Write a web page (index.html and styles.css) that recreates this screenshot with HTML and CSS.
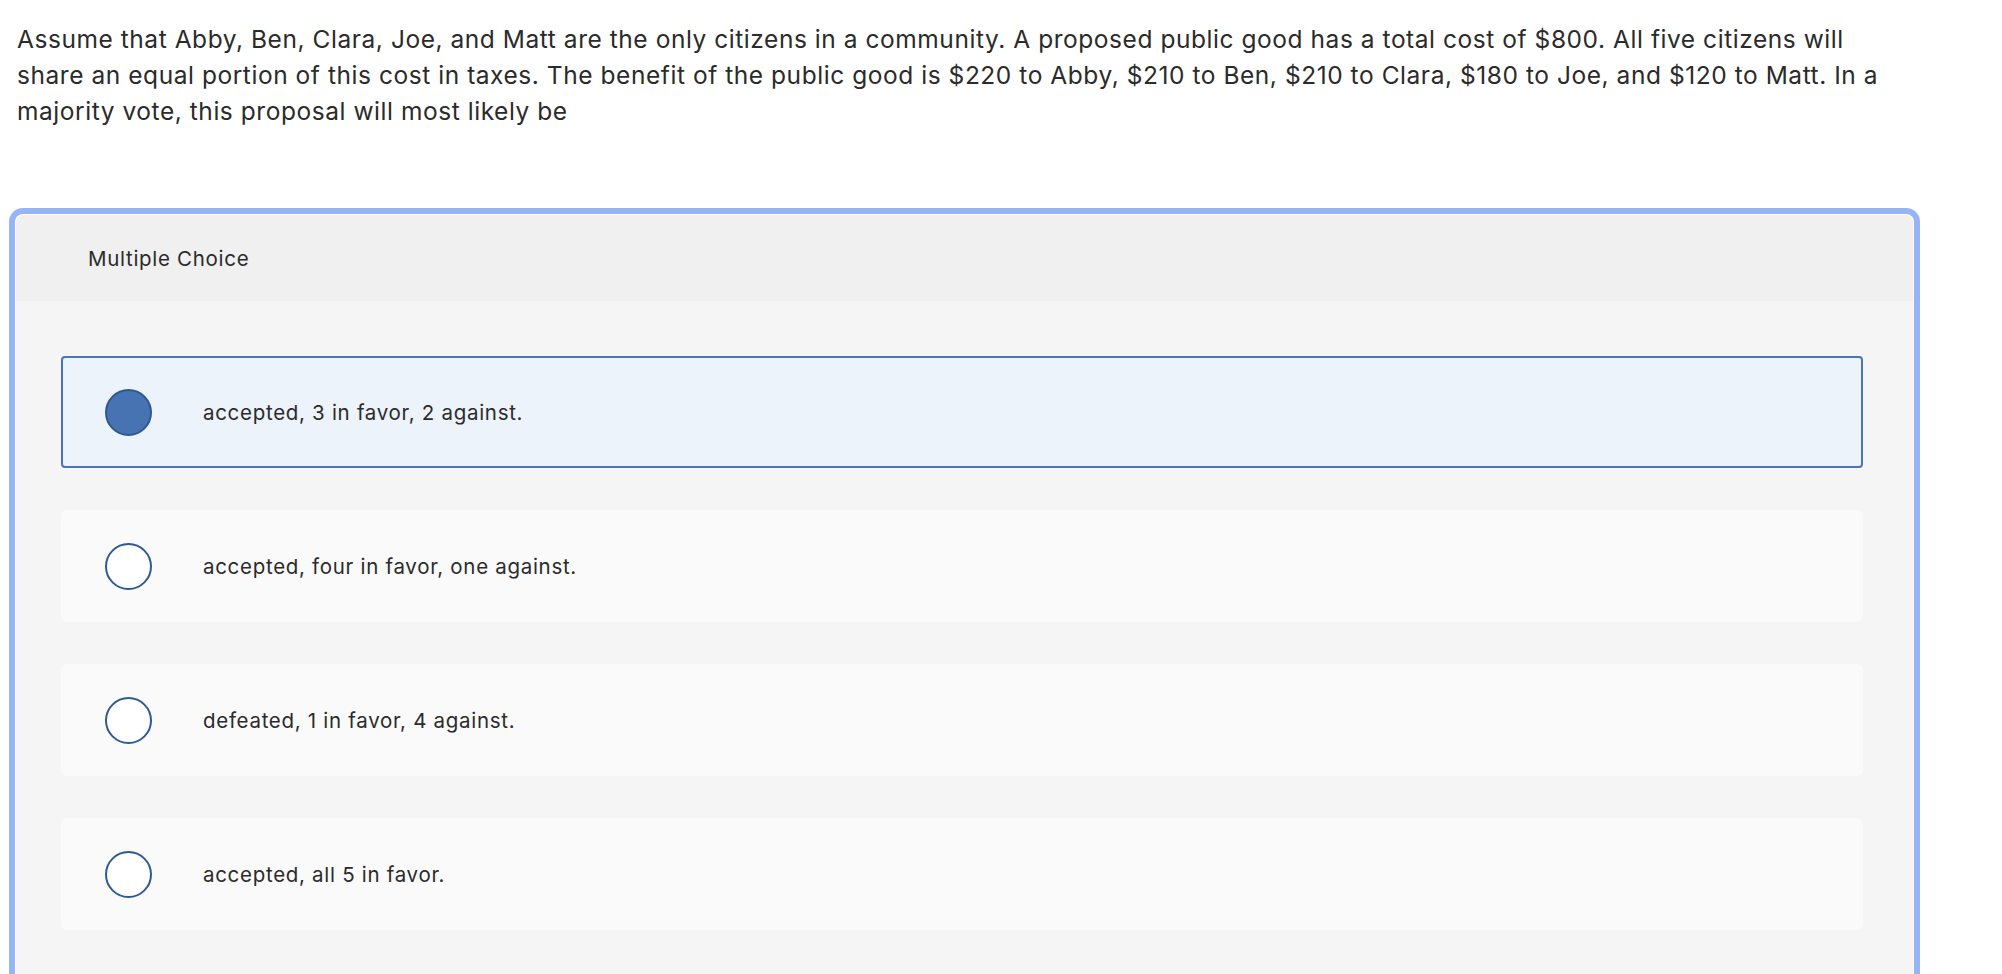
FILE: index.html
```html
<!DOCTYPE html>
<html lang="en">
<head>
<meta charset="utf-8">
<title>Multiple Choice</title>
<link rel="stylesheet" href="styles.css">
</head>
<body>
<div class="page">
  <p class="question">Assume that Abby, Ben, Clara, Joe, and Matt are the only citizens in a community. A proposed public good has a total cost of $800. All five citizens will share an equal portion of this cost in taxes. The benefit of the public good is $220 to Abby, $210 to Ben, $210 to Clara, $180 to Joe, and $120 to Matt. In a majority vote, this proposal will most likely be</p>

  <section class="frame">
    <div class="frame-inner">
      <header class="frame-head">Multiple Choice</header>
      <div class="choices">
        <div class="choice selected">
          <span class="radio"></span>
          <span class="label">accepted, 3 in favor, 2 against.</span>
        </div>
        <div class="choice">
          <span class="radio"></span>
          <span class="label">accepted, four in favor, one against.</span>
        </div>
        <div class="choice">
          <span class="radio"></span>
          <span class="label">defeated, 1 in favor, 4 against.</span>
        </div>
        <div class="choice">
          <span class="radio"></span>
          <span class="label">accepted, all 5 in favor.</span>
        </div>
      </div>
    </div>
  </section>
</div>
</body>
</html>
```
FILE: styles.css
```css
html, body {
  margin: 0;
  padding: 0;
  background: #ffffff;
}

body {
  font-family: Inter, "Open Sans", "Liberation Sans", sans-serif;
  color: #2b2b2b;
}

.page {
  padding: 21px 0 0 9px;
}

.question {
  margin: 0 0 79px 8px;
  width: 1895px;
  font-size: 24.5px;
  line-height: 36px;
  letter-spacing: 0.55px;
  color: #2b2b2b;
}

.frame {
  width: 1897px;
  border: 6px solid #97b4f6;
  border-bottom: 0;
  border-radius: 14px 14px 0 0;
  background: #ffffff;
  padding: 1px 1px 0 1px;
}

.frame-inner {
  background: #f5f5f5;
  border-radius: 8px 8px 0 0;
  overflow: hidden;
  padding-bottom: 60px;
}

.frame-head {
  height: 86px;
  display: flex;
  align-items: center;
  padding-left: 72px;
  background: #f0f0f0;
  font-size: 20.5px;
  letter-spacing: 0.7px;
  color: #2b2b2b;
}

.choices {
  display: flex;
  flex-direction: column;
  gap: 42px;
  padding: 55px 50px 0 45px;
}

.choice {
  height: 112px;
  box-sizing: border-box;
  display: flex;
  align-items: center;
  padding-left: 42px;
  background: #fafafa;
  border: 2px solid transparent;
  border-radius: 6px;
}

.choice.selected {
  background: #ecf3fb;
  border-color: #4a76b6;
  border-radius: 4px;
}

.radio {
  width: 47px;
  height: 47px;
  box-sizing: border-box;
  flex: none;
  border: 2px solid #2d5a95;
  border-radius: 50%;
  background: #ffffff;
}

.choice.selected .radio {
  background: #4873b2;
  border-color: #2f5890;
}

.label {
  margin-left: 51px;
  font-size: 20.5px;
  letter-spacing: 0.7px;
  color: #2b2b2b;
}
```
